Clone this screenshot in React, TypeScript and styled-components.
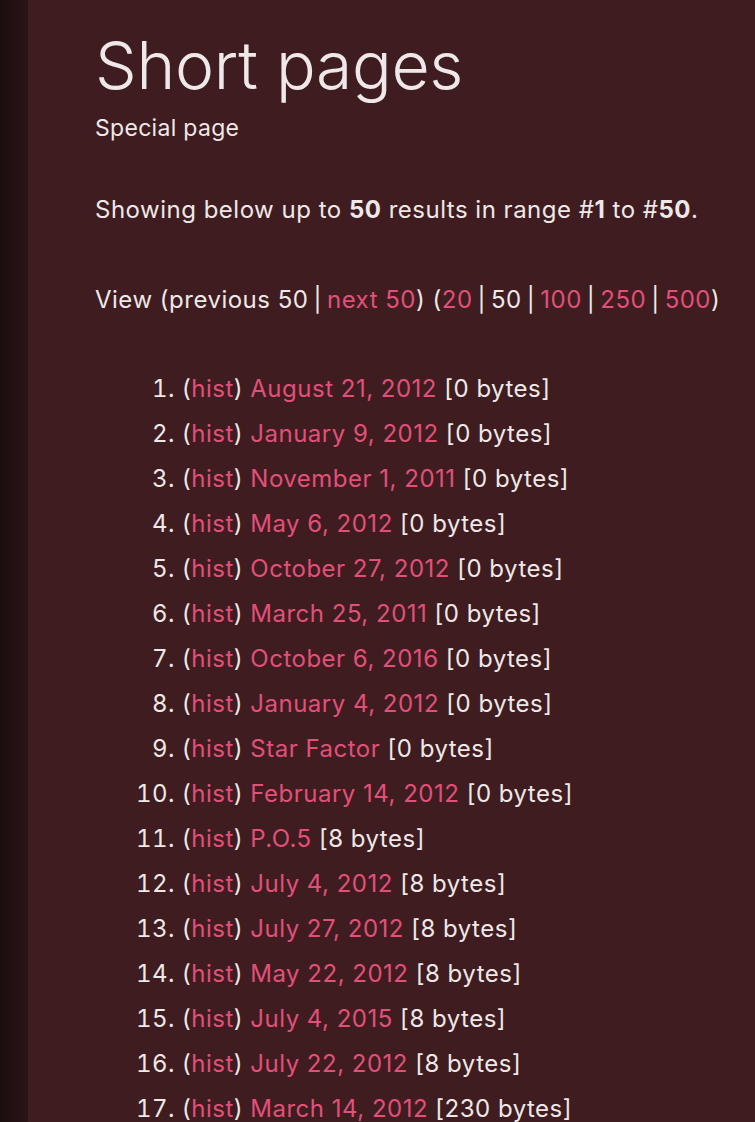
import * as React from 'react'
import styled, { createGlobalStyle } from 'styled-components'

const GlobalStyle = createGlobalStyle`
  html, body {
    margin: 0;
    padding: 0;
    background: #3e1c1f;
  }
  body {
    font-family: Inter, "Noto Sans", sans-serif;
    color: #efe8e8;
  }
`

const Page = styled.div`
  display: flex;
  height: 1122px;
  overflow: hidden;
`

const Sidebar = styled.aside`
  flex: 0 0 28px;
  background: linear-gradient(to right, #1c0d0f, #2a1417);
`

const Content = styled.main`
  flex: 1;
  padding: 19px 0 0 67px;
  white-space: nowrap;
`

const Title = styled.h1`
  margin: 0;
  font-size: 66px;
  font-weight: 300;
  line-height: 92px;
  letter-spacing: -0.3px;
`

const Subtitle = styled.div`
  font-size: 23px;
  line-height: 32px;
  margin-top: 1px;
  letter-spacing: 0.3px;
`

const Para = styled.p<{ $gap: number }>`
  margin: ${p => p.$gap}px 0 0;
  font-size: 24px;
  line-height: 32px;
  letter-spacing: 0.5px;
`

const Link = styled.a`
  color: #e2507a;
  text-decoration: none;
`

const Sep = styled.span`
  margin: 0 5px;
`

const List = styled.ol`
  margin: 50px 0 0;
  padding-left: 87px;
  font-size: 24px;
  line-height: 45px;
  letter-spacing: 0.5px;
`

const Item = styled.li`
  padding-left: 0;
`

const rows: [string, string][] = [
  ['August 21, 2012', '0 bytes'],
  ['January 9, 2012', '0 bytes'],
  ['November 1, 2011', '0 bytes'],
  ['May 6, 2012', '0 bytes'],
  ['October 27, 2012', '0 bytes'],
  ['March 25, 2011', '0 bytes'],
  ['October 6, 2016', '0 bytes'],
  ['January 4, 2012', '0 bytes'],
  ['Star Factor', '0 bytes'],
  ['February 14, 2012', '0 bytes'],
  ['P.O.5', '8 bytes'],
  ['July 4, 2012', '8 bytes'],
  ['July 27, 2012', '8 bytes'],
  ['May 22, 2012', '8 bytes'],
  ['July 4, 2015', '8 bytes'],
  ['July 22, 2012', '8 bytes'],
  ['March 14, 2012', '230 bytes'],
]

export default function App() {
  return (
    <>
      <GlobalStyle />
      <Page>
        <Sidebar />
        <Content>
          <Title>Short pages</Title>
          <Subtitle>Special page</Subtitle>
          <Para $gap={50}>
            Showing below up to <b>50</b> results in range #<b>1</b> to #<b>50</b>.
          </Para>
          <Para $gap={58}>
            View (previous 50<Sep>|</Sep><Link href="#">next 50</Link>) (<Link href="#">20</Link>
            <Sep>|</Sep>50<Sep>|</Sep><Link href="#">100</Link><Sep>|</Sep><Link href="#">250</Link>
            <Sep>|</Sep><Link href="#">500</Link>)
          </Para>
          <List>
            {rows.map(([title, size], i) => (
              <Item key={i}>
                (<Link href="#">hist</Link>) <Link href="#">{title}</Link> [{size}]
              </Item>
            ))}
          </List>
        </Content>
      </Page>
    </>
  )
}
